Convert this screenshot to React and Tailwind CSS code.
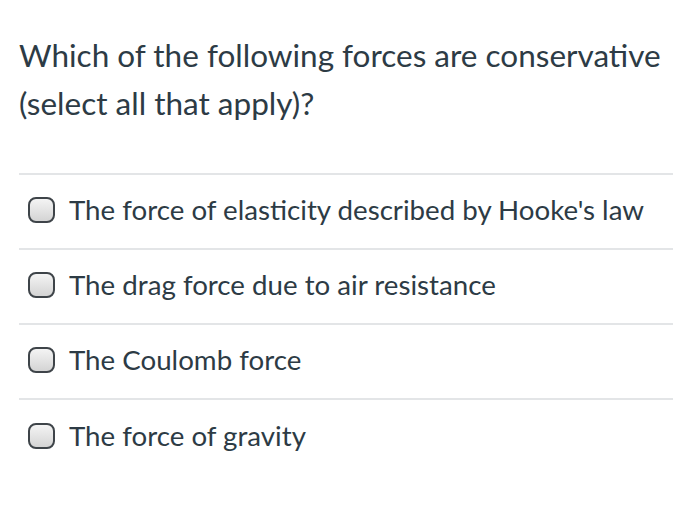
import React from "react";

const options = [
  "The force of elasticity described by Hooke's law",
  "The drag force due to air resistance",
  "The Coulomb force",
  "The force of gravity",
];

export default function App() {
  return (
    <div
      className="w-[700px] h-[508px] bg-white text-[#2d3b45] pl-[19px] pr-[27px] pt-[31px]"
      style={{ fontFamily: "Lato, 'Open Sans', sans-serif" }}
    >
      <p className="text-[31.5px] leading-[48px]">
        Which of the following forces are conservative (select all that apply)?
      </p>

      <div className="mt-[46px] border-t-2 border-[#e3e5e7]">
        {options.map((o) => (
          <Option key={o} label={o} />
        ))}
      </div>
    </div>
  );
}

const Option = ({ label }) => (
  <div className="flex items-center h-[75px] border-b-2 border-[#e3e5e7] last:border-none pl-[9px] pb-[3px]">
    <span className="w-[27px] h-[26px] rounded-[8px] border-2 border-[#3e4449] bg-gradient-to-b from-[#f4f4f4] to-[#d4d4d4] shrink-0" />
    <span className="ml-[14px] text-[27.7px]">{label}</span>
  </div>
);
